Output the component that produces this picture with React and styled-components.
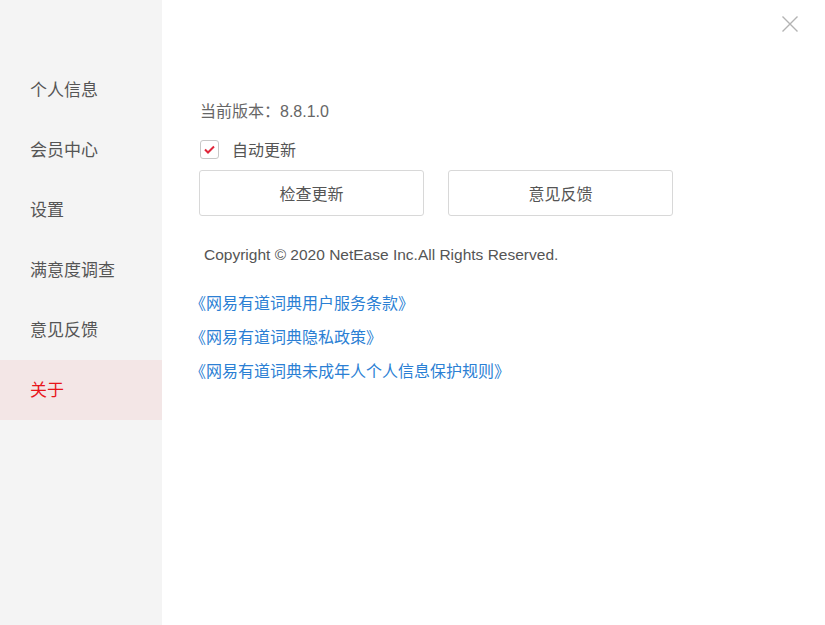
import React, { useState } from 'react';
import styled, { createGlobalStyle } from 'styled-components';

const GlobalStyle = createGlobalStyle`
  body {
    margin: 0;
    font-family: "Liberation Sans", "Noto Sans CJK SC", sans-serif;
    background: #ffffff;
  }
`

const menu = ['个人信息', '会员中心', '设置', '满意度调查', '意见反馈', '关于'];

const links = [
  '《网易有道词典用户服务条款》',
  '《网易有道词典隐私政策》',
  '《网易有道词典未成年人个人信息保护规则》',
];

const App = () => {
  const [active, setActive] = useState(5);
  const [autoUpdate, setAutoUpdate] = useState(true);

  return (
    <Wrapper>
      <GlobalStyle />
      <Sidebar>
        {menu.map((item, i) => (
          <MenuItem key={item} isActive={i === active} onClick={() => setActive(i)}>
            {item}
          </MenuItem>
        ))}
      </Sidebar>
      <Content>
        <CloseBtn aria-label="close">
          <svg width="18" height="18" viewBox="0 0 18 18">
            <path d="M1.5 1.5 L16.5 16.5 M16.5 1.5 L1.5 16.5" stroke="#b3b3b3" strokeWidth="1.4" fill="none" />
          </svg>
        </CloseBtn>
        <Version>当前版本：8.8.1.0</Version>
        <CheckRow onClick={() => setAutoUpdate(!autoUpdate)}>
          <CheckBox>
            {autoUpdate &&
            <svg width="11" height="9" viewBox="0 0 11 9">
              <path d="M1 4.5 L4 7.5 L10 1.5" stroke="#e0263a" strokeWidth="2" fill="none" />
            </svg>}
          </CheckBox>
          <CheckLabel>自动更新</CheckLabel>
        </CheckRow>
        <ButtonRow>
          <Button>检查更新</Button>
          <Button>意见反馈</Button>
        </ButtonRow>
        <Copyright>Copyright © 2020 NetEase Inc.All Rights Reserved.</Copyright>
        <LinkList>
          {links.map(link => (
            <Link key={link}>{link}</Link>
          ))}
        </LinkList>
      </Content>
    </Wrapper>
  );
}

const Wrapper = styled.div`
  display: flex;
  width: 100vw;
  height: 100vh;
  overflow: hidden;
`

const Sidebar = styled.div`
  width: 162px;
  flex-shrink: 0;
  background-color: #f4f4f4;
  padding-top: 60px;
  box-sizing: border-box;
`

const MenuItem = styled.div`
  height: 60px;
  box-sizing: border-box;
  display: flex;
  align-items: center;
  padding: 0 0 4px 30px;
  font-size: 17px;
  color: ${props => props.isActive ? '#e8151b' : '#555555'};
  background-color: ${props => props.isActive ? '#f3e6e6' : 'transparent'};
  cursor: pointer;
`

const Content = styled.div`
  position: relative;
  flex: 1;
  min-width: 0;
  padding: 100px 0 0 28px;
  box-sizing: border-box;
`

const CloseBtn = styled.div`
  position: absolute;
  top: 15px;
  right: 26px;
  width: 18px;
  height: 18px;
  cursor: pointer;
`

const Version = styled.div`
  margin-left: 10px;
  font-size: 16px;
  line-height: 24px;
  color: #666666;
`

const CheckRow = styled.div`
  margin: 15px 0 0 10px;
  display: flex;
  align-items: center;
  height: 20px;
  cursor: pointer;
`

const CheckBox = styled.div`
  width: 17px;
  height: 17px;
  border: 1px solid #c8c8c8;
  border-radius: 3px;
  display: flex;
  align-items: center;
  justify-content: center;
  background: #fff;
`

const CheckLabel = styled.span`
  margin-left: 13px;
  font-size: 16px;
  color: #555555;
`

const ButtonRow = styled.div`
  margin: 11px 0 0 9px;
  display: flex;
  gap: 24px;
`

const Button = styled.div`
  width: 225px;
  height: 46px;
  box-sizing: border-box;
  border: 1px solid #d8d8d8;
  border-radius: 3px;
  display: flex;
  align-items: center;
  justify-content: center;
  font-size: 16px;
  color: #555555;
  cursor: pointer;
`

const Copyright = styled.div`
  margin: 27px 0 0 14px;
  font-size: 15.5px;
  line-height: 24px;
  color: #555555;
`

const LinkList = styled.div`
  margin-top: 25px;
  display: flex;
  flex-direction: column;
  gap: 10px;
`

const Link = styled.a`
  font-size: 16px;
  line-height: 24px;
  color: #2b7fd4;
  cursor: pointer;
`

export default App;
